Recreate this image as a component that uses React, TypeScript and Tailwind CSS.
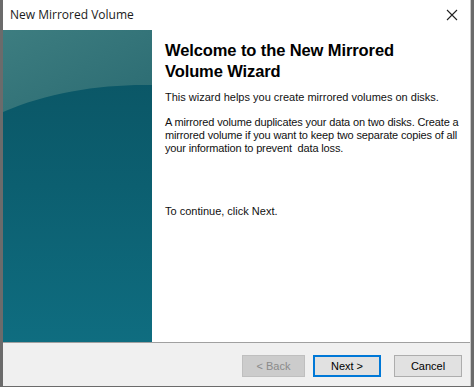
import React from "react";

const ui = { fontFamily: '"Liberation Sans", Arial, sans-serif' };

export default function App() {
  return (
    <div className="w-[474px] h-[387px] bg-[#6b6b6b] flex overflow-hidden" style={ui}>
      <div className="ml-[3px] w-[468px] h-[386px] bg-white flex flex-col border-r border-[#c8c8c8]">
        {/* Title bar */}
        <div className="h-[30px] flex items-center justify-between pl-[7px] pr-[10px] shrink-0">
          <span className="text-[12px] text-[#1a1a1a]" style={{ fontFamily: '"Open Sans", "Noto Sans", sans-serif' }}>
            New Mirrored Volume
          </span>
          <svg width="12" height="12" viewBox="0 0 12 12" className="mr-[2px]">
            <path d="M1 1 L11 11 M11 1 L1 11" stroke="#222" strokeWidth="1.1" />
          </svg>
        </div>

        {/* Body */}
        <div className="flex h-[312px] shrink-0">
          <div className="w-[149px] h-full relative overflow-hidden">
            <svg width="149" height="312" viewBox="0 0 149 312" preserveAspectRatio="none" className="block">
              <defs>
                <linearGradient id="top" x1="0" y1="0" x2="1" y2="1">
                  <stop offset="0" stopColor="#3d7d80" />
                  <stop offset="1" stopColor="#2b6b72" />
                </linearGradient>
                <linearGradient id="bot" x1="0" y1="0" x2="0" y2="1">
                  <stop offset="0" stopColor="#0a5362" />
                  <stop offset="0.5" stopColor="#0c5f70" />
                  <stop offset="1" stopColor="#0f6d80" />
                </linearGradient>
              </defs>
              <rect width="149" height="312" fill="url(#bot)" />
              <path d="M0 0 H149 V55 C100 54 45 62 0 82 Z" fill="url(#top)" />
            </svg>
          </div>
          <div className="flex-1 pl-[13px] pr-[4px] pt-[10px] text-black whitespace-nowrap">
            <h1 className="text-[16.5px] leading-[21px] font-bold tracking-[-0.1px]">
              Welcome to the New Mirrored
              <br />
              Volume Wizard
            </h1>
            <p className="mt-[9px] text-[11px] leading-[13px] text-[#111]">
              This wizard helps you create mirrored volumes on disks.
            </p>
            <p className="mt-[12px] text-[11px] leading-[13px] text-[#111] tracking-[-0.15px]">
              A mirrored volume duplicates your data on two disks. Create a
              <br />
              mirrored volume if you want to keep two separate copies of all
              <br />
              your information to prevent&nbsp; data loss.
            </p>
            <p className="mt-[50px] text-[11px] leading-[13px] text-[#111]">To continue, click Next.</p>
          </div>
        </div>

        {/* Footer */}
        <div className="flex-1 bg-[#f0f0f0] border-t border-[#a0a0a0] flex items-start justify-end pt-[12px] pr-[8px] gap-[8px]">
          <button className="w-[63px] h-[22px] bg-[#cccccc] border border-[#bfbfbf] text-[11px] text-[#8a8a8a]">
            &lt; Back
          </button>
          <button className="w-[68px] h-[22px] bg-[#e1e1e1] border-2 border-[#0078d7] text-[11px] text-black">
            Next &gt;
          </button>
          <button className="ml-[5px] w-[68px] h-[22px] bg-[#e1e1e1] border border-[#adadad] text-[11px] text-black">
            Cancel
          </button>
        </div>
      </div>
    </div>
  );
}
